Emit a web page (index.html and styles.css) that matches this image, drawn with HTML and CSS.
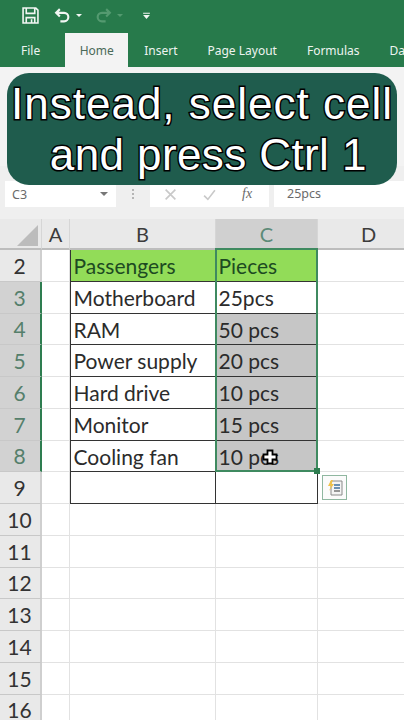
FILE: index.html
```html
<!DOCTYPE html>
<html lang="en">
<head>
<meta charset="utf-8">
<title>Excel tip</title>
<link rel="stylesheet" href="styles.css">
</head>
<body>
<div class="app">
  <header class="ribbon">
    <div class="qat">
      <svg class="ico save" viewBox="0 0 16 16"><path d="M1 1h12l2 2v12H1z M4 1v5h8V1 M4 15v-5h8v5 M9 11.500v3" fill="none" stroke="#f2f6f3" stroke-width="1.500"/></svg>
      <svg class="ico undo" viewBox="0 0 16 16"><path d="M5.500 2 2 5.500 5.500 9 M2 5.500h7.500a4 4 0 0 1 0 8H6" fill="none" stroke="#f2f6f3" stroke-width="2"/></svg>
      <span class="caret"></span>
      <svg class="ico redo" viewBox="0 0 16 16"><path d="M10.500 2 14 5.500 10.500 9 M14 5.500H6.500a4 4 0 0 0 0 8H10" fill="none" stroke="#549a70" stroke-width="2"/></svg>
      <span class="caret dim"></span>
      <svg class="ico more" viewBox="0 0 8 8"><path d="M1 1.500h6v1H1z M1 3.500h6L4 7z" fill="#f2f6f3"/></svg>
    </div>
    <nav class="tabs">
      <span class="tab">File</span>
      <span class="tab active">Home</span>
      <span class="tab">Insert</span>
      <span class="tab">Page Layout</span>
      <span class="tab">Formulas</span>
      <span class="tab">Data</span>
    </nav>
  </header>
  <div class="band"></div>
  <div class="fbar">
    <div class="namebox"><span>C3</span><span class="ncaret"></span></div>
    <span class="grip"></span>
    <div class="fbtns">
      <svg class="ico x" viewBox="0 0 12 12"><path d="M1.500 1.500l9 9M10.500 1.500l-9 9" stroke="#c9c9c9" stroke-width="1.500" fill="none"/></svg>
      <svg class="ico x" viewBox="0 0 12 12"><path d="M1 7l3.500 3.500L11 2" stroke="#c9c9c9" stroke-width="1.500" fill="none"/></svg>
      <span class="fx">fx</span>
    </div>
    <div class="finput">25pcs</div>
  </div>
  <main class="sheet">
    <div class="corner"><span class="tri"></span></div><div class="ch">A</div><div class="ch">B</div><div class="ch sel">C</div><div class="ch">D</div>

    <div class="rh">2</div><div class="c"></div><div class="c t head first">Passengers</div><div class="c t head">Pieces</div><div class="c"></div>
    <div class="rh on">3</div><div class="c"></div><div class="c t first">Motherboard</div><div class="c t">25pcs</div><div class="c"></div>
    <div class="rh on">4</div><div class="c"></div><div class="c t first">RAM</div><div class="c t g">50 pcs</div><div class="c"></div>
    <div class="rh on">5</div><div class="c"></div><div class="c t first">Power supply</div><div class="c t g">20 pcs</div><div class="c"></div>
    <div class="rh on">6</div><div class="c"></div><div class="c t first">Hard drive</div><div class="c t g">10 pcs</div><div class="c"></div>
    <div class="rh on">7</div><div class="c"></div><div class="c t first">Monitor</div><div class="c t g">15 pcs</div><div class="c"></div>
    <div class="rh on">8</div><div class="c"></div><div class="c t first">Cooling fan</div><div class="c t g">10 pcs</div><div class="c"></div>
    <div class="rh">9</div><div class="c"></div><div class="c t first"></div><div class="c t"></div><div class="c"></div>
    <div class="rh">10</div><div class="c"></div><div class="c"></div><div class="c"></div><div class="c"></div>
    <div class="rh">11</div><div class="c"></div><div class="c"></div><div class="c"></div><div class="c"></div>
    <div class="rh">12</div><div class="c"></div><div class="c"></div><div class="c"></div><div class="c"></div>
    <div class="rh">13</div><div class="c"></div><div class="c"></div><div class="c"></div><div class="c"></div>
    <div class="rh">14</div><div class="c"></div><div class="c"></div><div class="c"></div><div class="c"></div>
    <div class="rh">15</div><div class="c"></div><div class="c"></div><div class="c"></div><div class="c"></div>
    <div class="rh">16</div><div class="c"></div><div class="c"></div><div class="c"></div><div class="c"></div>

    <div class="selection"><span class="handle"></span>
      <svg class="cursor" viewBox="0 0 16 16"><path d="M5.500 1.500h5v4h4v5h-4v4h-5v-4h-4v-5h4z" fill="#fff" stroke="#000" stroke-width="1.800"/></svg>
    </div>
    <div class="smart">
      <svg viewBox="0 0 20 20"><path d="M6 3h11v14H6z" fill="#f4f4f4" stroke="#8a8a8a"/><path d="M9 7h6M9 10h6" stroke="#3c6f9c" stroke-width="1.500"/><path d="M9 13h6" stroke="#777" stroke-width="1.500"/><path d="M6 2 3 8h3l-2 5 5-7H6.500L8 2z" fill="#f0c24b"/></svg>
    </div>
  </main>
  <div class="caption"><span class="line1">Instead, select cell</span><br>&nbsp;and press Ctrl 1</div>
</div>
</body>
</html>
```

FILE: styles.css
```css
* { box-sizing: border-box; }
html, body { margin: 0; padding: 0; }
body { width: 404px; height: 720px; overflow: hidden; background: #fff; font-family: "Noto Sans", sans-serif; }
.app { position: relative; width: 404px; height: 720px; overflow: hidden; display: flex; flex-direction: column; }

.ribbon { height: 67px; background: #277a4b; display: flex; flex-direction: column; flex: none; }
.qat { height: 33px; display: flex; align-items: center; padding-left: 22px; padding-bottom: 3px; }
.ico { display: block; flex: none; }
.save { width: 17px; height: 17px; margin-right: 15px; }
.undo { width: 17px; height: 17px; margin-right: 5px; }
.caret { width: 0; height: 0; border: 3px solid transparent; border-top: 3px solid #f2f6f3; border-bottom: 0; margin-right: 13px; }
.caret.dim { border-top-color: #549a70; margin-right: 19px; }
.redo { width: 17px; height: 17px; margin-right: 5px; }
.more { width: 9px; height: 9px; }

.tabs { height: 34px; display: flex; padding-left: 21px; gap: 30px; color: #eef4f0; font-size: 12px; }
.tab { height: 34px; line-height: 35px; white-space: nowrap; flex: none; }
.tab.active { width: 63px; margin: 0 -14px 0 -5px; text-align: center; background: #f3f3f3; color: #4a6a58; }

.band { height: 99px; background: #f3f3f3; flex: none; }
.fbar { height: 53px; flex: none; background: #efefef; display: flex; align-items: flex-start; padding-top: 15px; padding-left: 5px; }
.namebox { width: 111px; height: 26px; background: #fff; display: flex; align-items: center; justify-content: space-between; padding: 0 8px 0 7px; color: #6a6a6a; font-size: 12.500px; }
.ncaret { width: 0; height: 0; border: 4px solid transparent; border-top: 4px solid #777; border-bottom: 0; }
.grip { width: 2px; height: 10px; margin: 8px 16px 0 16px; border-left: 2px dotted #b5b5b5; flex: none; }
.fbtns { width: 119px; height: 26px; background: #fff; display: flex; align-items: center; gap: 26px; padding-left: 14px; }
.x { width: 13px; height: 13px; }
.fx { font-family: "Liberation Serif", serif; font-style: italic; color: #6a6a6a; font-size: 14px; }
.finput { margin-left: 5px; flex: 1; height: 26px; background: #fff; color: #6a6a6a; font-size: 12.500px; line-height: 26px; padding-left: 13px; }

.sheet { flex: 1; min-height: 0; overflow: hidden; position: relative; display: grid; grid-template-columns: 42px 28px 146px 102px 102px; grid-template-rows: 31px repeat(15, 31.750px); background: #fff; color: #2a2a2a; font-family: Lato, sans-serif; }
.corner { background: #e9e9e9; border-right: 1px solid #d6d6d6; border-bottom: 2px solid #bdbdbd; display: flex; align-items: flex-end; justify-content: flex-end; padding: 0 3px 2px 0; }
.tri { width: 21px; height: 21px; background: #bcbcbc; clip-path: polygon(100% 0, 100% 100%, 0 100%); }
.ch { background: #e9e9e9; border-right: 1px solid #d6d6d6; border-bottom: 2px solid #bdbdbd; display: flex; align-items: center; justify-content: center; font-size: 20px; color: #3c3c3c; }
.ch.sel { background: #d0d0d0; color: #5c8a78; border-bottom-color: #2e7d50; }
.rh { background: #e9e9e9; border-right: 2px solid #cfcfcf; border-bottom: 1px solid #c8c8c8; display: flex; align-items: center; justify-content: center; font-size: 21px; color: #333; padding-right: 1px; }
.rh.on { background: #d2d2d2; color: #557f6b; border-right-color: #2e7d50; }
.c { border-right: 1px solid #e2e2e2; border-bottom: 1px solid #e2e2e2; min-width: 0; }
.t { border-right: 1.500px solid #333; border-bottom: 1.500px solid #333; font-size: 21px; line-height: 32px; padding-left: 2.500px; white-space: nowrap; color: #2b2b2b; }
.first { border-left: 1.500px solid #333; }
.head { background: #92dc58; color: #1d4a22; }
.g { background: #c6c6c6; }

.selection { position: absolute; grid-column: 4 / 5; grid-row: 2 / 9; inset: -2px 0 0 -1px; border: 2px solid #3f8a60; pointer-events: none; }
.handle { position: absolute; right: -4px; bottom: -4px; width: 6px; height: 6px; background: #2e7d50; }
.cursor { position: absolute; left: 45px; bottom: 5px; width: 16px; height: 16px; }
.smart { position: absolute; grid-column: 5 / 6; grid-row: 9 / 10; left: 4px; top: 3px; width: 25px; height: 25px; background: #fbfbfb; border: 1px solid #8fb7a0; display: flex; align-items: center; justify-content: center; }
.smart svg { width: 20px; height: 20px; display: block; }

.caption { position: absolute; left: 7px; top: 73px; width: 390px; height: 112px; background: #1f5c4d; border-radius: 22px; color: #fff; font-family: "Liberation Sans", sans-serif; font-size: 44px; line-height: 51px; text-align: center; padding-top: 5px; white-space: nowrap; -webkit-text-stroke: 3px #000; paint-order: stroke fill; letter-spacing: 0.400px; }
.line1 { letter-spacing: 1px; }
```
